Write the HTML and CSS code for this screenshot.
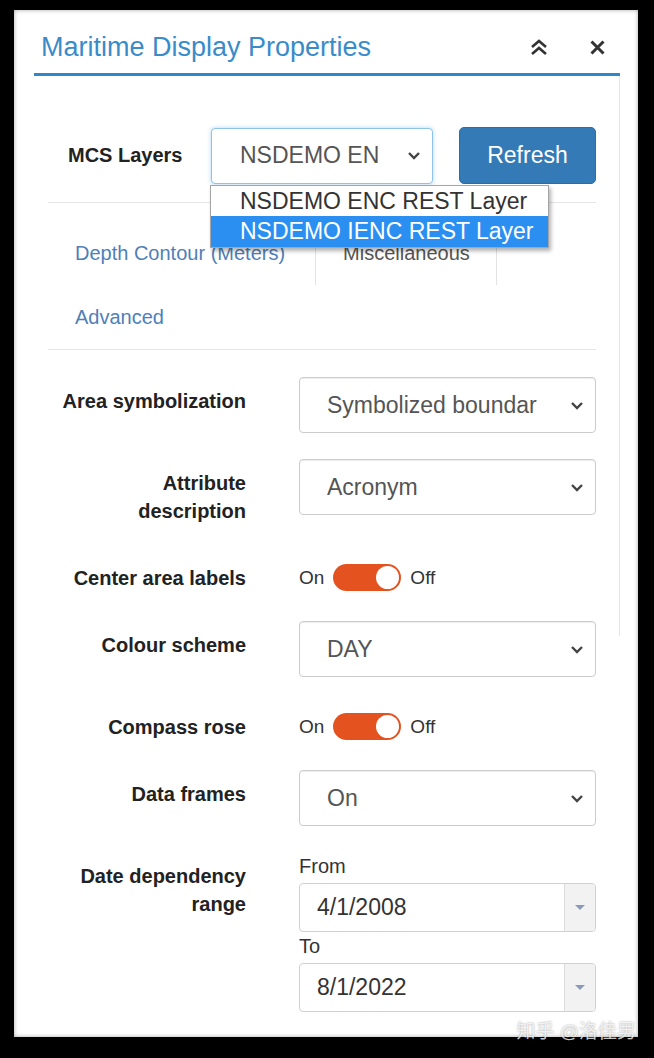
FILE: index.html
```html
<!DOCTYPE html>
<html lang="en">
<head>
    <meta charset="UTF-8">
    <meta name="viewport" content="width=device-width, initial-scale=1.0">
    <title>Maritime Display Properties</title>
    <link rel="stylesheet" href="styles.css">
</head>
<body>
<div class="panel">
    <div class="panel-head">
        <h2 class="panel-title">Maritime Display Properties</h2>
        <div class="head-tools">
            <span class="tool-btn tool-collapse">
                <svg width="20" height="18" viewBox="0 0 20 18"><path d="M3 9 L10 3 L17 9 M3 16 L10 10 L17 16" fill="none" stroke="#333" stroke-width="2.6"/></svg>
            </span>
            <span class="tool-btn tool-close">
                <svg width="17" height="17" viewBox="0 0 17 17"><path d="M2.5 2.5 L14.5 14.5 M14.5 2.5 L2.5 14.5" fill="none" stroke="#333" stroke-width="3"/></svg>
            </span>
        </div>
    </div>

    <div class="panel-body">
        <div class="layer-row">
            <label class="layer-label">MCS Layers</label>
            <div class="select layer-select is-open">
                <span class="select-value">NSDEMO ENC REST Layer</span>
                <svg class="select-caret" width="14" height="9" viewBox="0 0 14 9"><path d="M2 2 L7 7 L12 2" fill="none" stroke="#444" stroke-width="2.4"/></svg>
                <ul class="select-options">
                    <li>NSDEMO ENC REST Layer</li>
                    <li class="active">NSDEMO IENC REST Layer</li>
                </ul>
            </div>
            <button type="button" class="btn-refresh">Refresh</button>
        </div>

        <ul class="tabs">
            <li class="tab">Depth Contour (Meters)</li>
            <li class="tab current">Miscellaneous</li>
            <li class="tab">Advanced</li>
        </ul>

        <div class="settings">
            <div class="field-label">Area symbolization</div>
            <div class="select">
                <span class="select-value">Symbolized boundary</span>
                <svg class="select-caret" width="14" height="9" viewBox="0 0 14 9"><path d="M2 2 L7 7 L12 2" fill="none" stroke="#444" stroke-width="2.4"/></svg>
            </div>

            <div class="field-label">Attribute description</div>
            <div class="select">
                <span class="select-value">Acronym</span>
                <svg class="select-caret" width="14" height="9" viewBox="0 0 14 9"><path d="M2 2 L7 7 L12 2" fill="none" stroke="#444" stroke-width="2.4"/></svg>
            </div>

            <div class="field-label">Center area labels</div>
            <div class="toggle-field">
                <span>On</span>
                <span class="switch"></span>
                <span>Off</span>
            </div>

            <div class="field-label">Colour scheme</div>
            <div class="select">
                <span class="select-value">DAY</span>
                <svg class="select-caret" width="14" height="9" viewBox="0 0 14 9"><path d="M2 2 L7 7 L12 2" fill="none" stroke="#444" stroke-width="2.4"/></svg>
            </div>

            <div class="field-label">Compass rose</div>
            <div class="toggle-field">
                <span>On</span>
                <span class="switch"></span>
                <span>Off</span>
            </div>

            <div class="field-label">Data frames</div>
            <div class="select">
                <span class="select-value">On</span>
                <svg class="select-caret" width="14" height="9" viewBox="0 0 14 9"><path d="M2 2 L7 7 L12 2" fill="none" stroke="#444" stroke-width="2.4"/></svg>
            </div>

            <div class="field-label">Date dependency range</div>
            <div class="date-field">
                <span class="date-caption">From</span>
                <div class="date-input">
                    <span class="date-value">4/1/2008</span>
                    <span class="date-btn"><span class="date-arrow"></span></span>
                </div>
                <span class="date-caption date-to">To</span>
                <div class="date-input">
                    <span class="date-value">8/1/2022</span>
                    <span class="date-btn"><span class="date-arrow"></span></span>
                </div>
            </div>
        </div>
    </div>

    <div class="scroll-thumb"></div>
</div>
<div class="watermark">知乎 @洛佳男</div>
</body>
</html>
```

FILE: styles.css
```css
body {
    margin: 0;
    padding: 10px 0 0 14px;
    height: 1048px;
    background: #000000;
    font-family: 'Liberation Sans', Arial, sans-serif;
    color: #333333;
    position: relative;
    overflow: hidden;
}

.panel {
    position: relative;
    width: 624px;
    height: 1027px;
    background: #ffffff;
    overflow: hidden;
    box-shadow: inset 0 0 4px rgba(0, 0, 0, 0.35);
}

/* header */
.panel-head {
    display: flex;
    align-items: center;
    margin: 0 18px 0 20px;
    padding: 22px 14px 11px 7px;
    border-bottom: 3px solid #2f86c8;
}

.panel-title {
    margin: 0;
    font-size: 27px;
    line-height: 30px;
    font-weight: normal;
    color: #3a8bc9;
}

.head-tools {
    margin-left: auto;
    display: flex;
    align-items: center;
    gap: 40px;
}

.tool-btn {
    display: flex;
    cursor: pointer;
}

/* body */
.panel-body {
    margin: 0 42px 0 34px;
}

.layer-row {
    display: flex;
    align-items: center;
    margin-top: 51px;
    padding-bottom: 18px;
    border-bottom: 1px solid #e5e5e5;
}

.layer-label {
    width: 143px;
    padding-left: 20px;
    font-size: 20px;
    font-weight: bold;
    color: #222222;
}

.select {
    position: relative;
    display: flex;
    align-items: center;
    box-sizing: border-box;
    height: 56px;
    padding: 0 11px 0 27px;
    border: 1px solid #cccccc;
    border-radius: 4px;
    box-shadow: inset 0 1px 1px rgba(0, 0, 0, 0.075);
    font-size: 23px;
    color: #555555;
    background: #ffffff;
}

.select-value {
    width: 210px;
    overflow: hidden;
    white-space: nowrap;
}

.select-caret {
    margin-left: auto;
}

.layer-select {
    width: 222px;
    padding-left: 28px;
    border-color: #8fc3ea;
    box-shadow: 0 0 4px rgba(102, 175, 233, 0.5);
}

.layer-select .select-value {
    width: 140px;
}

.select-options {
    position: absolute;
    top: 56px;
    left: -2px;
    z-index: 5;
    width: 337px;
    margin: 0;
    padding: 0;
    list-style: none;
    background: #ffffff;
    border: 1px solid #a5a5a5;
    box-shadow: 2px 3px 4px rgba(0, 0, 0, 0.3);
}

.select-options li {
    height: 30px;
    line-height: 30px;
    padding-left: 29px;
    font-size: 23px;
    color: #333333;
    white-space: nowrap;
}

.select-options li.active {
    height: 31px;
    background: #2a8ff0;
    color: #ffffff;
}

.btn-refresh {
    margin-left: 26px;
    width: 137px;
    height: 57px;
    border: 1px solid #2e6da4;
    border-radius: 5px;
    background: #337ab7;
    color: #ffffff;
    font-family: inherit;
    font-size: 23px;
    cursor: pointer;
}

/* tabs */
.tabs {
    display: flex;
    flex-wrap: wrap;
    margin: 0;
    padding: 18px 0 0;
    list-style: none;
    border-bottom: 1px solid #e5e5e5;
}

.tab {
    height: 64px;
    line-height: 64px;
    padding: 0 30px 0 27px;
    font-size: 20px;
    color: #4f80b8;
    border-right: 1px solid #e3e3e3;
    white-space: nowrap;
}

.tab.current {
    padding-right: 26px;
    color: #555555;
}

.tab:last-child {
    border-right: none;
}

/* settings grid */
.settings {
    display: grid;
    grid-template-columns: 198px 297px;
    column-gap: 53px;
    row-gap: 26px;
    margin-top: 27px;
}

.field-label {
    padding: 10px 0 3px 12px;
    font-size: 20px;
    line-height: 28px;
    font-weight: bold;
    text-align: right;
    color: #222222;
}

.toggle-field {
    display: flex;
    align-items: center;
    gap: 9px;
    padding-top: 10px;
    height: 27px;
    font-size: 19px;
    color: #333333;
}

.switch {
    position: relative;
    width: 68px;
    height: 27px;
    border-radius: 14px;
    background: #e4531f;
}

.switch::after {
    content: "";
    position: absolute;
    top: 2px;
    right: 2px;
    width: 23px;
    height: 23px;
    border-radius: 50%;
    background: #ffffff;
}

.date-field {
    display: flex;
    flex-direction: column;
}

.date-caption {
    font-size: 20px;
    line-height: 24px;
    padding-top: 2px;
    color: #333333;
}

.date-to {
    padding-top: 0;
    margin-top: 2px;
}

.date-input {
    display: flex;
    box-sizing: border-box;
    height: 49px;
    margin-top: 5px;
    border: 1px solid #d0d0d0;
    border-radius: 4px;
    overflow: hidden;
}

.date-value {
    flex: 1;
    display: flex;
    align-items: center;
    padding-left: 17px;
    font-size: 23px;
    color: #333333;
}

.date-btn {
    display: flex;
    align-items: center;
    justify-content: center;
    width: 30px;
    background: #f2f2f2;
    border-left: 1px solid #dddddd;
}

.date-arrow {
    width: 0;
    height: 0;
    border-left: 5px solid transparent;
    border-right: 5px solid transparent;
    border-top: 5px solid #8a9bb8;
}

.scroll-thumb {
    position: absolute;
    top: 66px;
    left: 605px;
    width: 1px;
    height: 560px;
    background: #e6e6e6;
}

.watermark {
    position: absolute;
    right: 18px;
    top: 1016px;
    font-family: 'Liberation Sans', 'Noto Sans CJK SC', sans-serif;
    font-size: 19px;
    color: rgba(255, 255, 255, 0.8);
    text-shadow: 0 0 2px rgba(0, 0, 0, 0.4);
}
```
